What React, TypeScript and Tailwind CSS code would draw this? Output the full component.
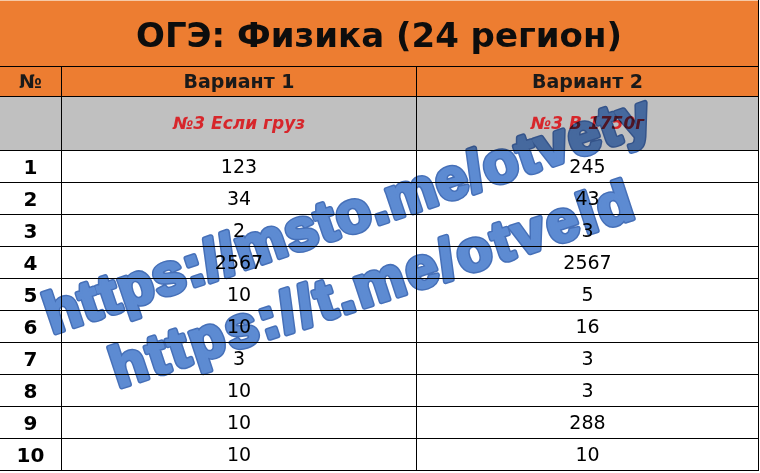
const rows = [
  { n: 1, a: "123", b: "245" },
  { n: 2, a: "34", b: "43" },
  { n: 3, a: "2", b: "3" },
  { n: 4, a: "2567", b: "2567" },
  { n: 5, a: "10", b: "5" },
  { n: 6, a: "10", b: "16" },
  { n: 7, a: "3", b: "3" },
  { n: 8, a: "10", b: "3" },
  { n: 9, a: "10", b: "288" },
  { n: 10, a: "10", b: "10" },
];

const WmLines = () => (
  <>
    <text x="52" y="334" textLength="636" lengthAdjust="spacing" transform="rotate(-18.6 52 334)">
      https://msto.me/otvety
    </text>
    <text x="118" y="388" textLength="546" lengthAdjust="spacing" transform="rotate(-18.2 118 388)">
      https://t.me/otveld
    </text>
  </>
);

const Watermark = () => (
  <svg
    className="absolute inset-0 pointer-events-none mix-blend-multiply"
    width="760"
    height="473"
    viewBox="0 0 760 473"
  >
    <g
      fontFamily="'Liberation Sans', Arial, sans-serif"
      fontWeight="bold"
      fontSize="57"
      strokeLinejoin="round"
      strokeLinecap="round"
    >
      {/* darker rim under the fill */}
      <g fill="#4670b8" stroke="#4670b8" strokeWidth="5.5">
        <WmLines />
      </g>
      <g fill="#5d8bd2" stroke="#5d8bd2" strokeWidth="2.5">
        <WmLines />
      </g>
    </g>
  </svg>
);

export default function App() {
  return (
    <div className="relative w-[760px] h-[473px] bg-white overflow-hidden font-['DejaVu_Sans',sans-serif] text-black">
      <div className="w-[759px] border-r-[1.5px] border-black">
        {/* Title */}
        <div className="h-[67px] bg-[#ed7d31] border-t border-t-[#f6c9a6] border-b-[1.5px] border-b-black flex items-center justify-center">
          <span className="text-[34px] font-bold text-[#0d0d0d] leading-none pt-[2px]">
            ОГЭ: Физика (24 регион)
          </span>
        </div>

        {/* Column headers */}
        <div className="h-[30px] bg-[#ed7d31] border-b-[1.5px] border-black flex text-[19px] font-bold text-[#1a1a1a]">
          <div className="w-[62px] border-r-[1.5px] border-black flex items-center justify-center">№</div>
          <div className="w-[355px] border-r-[1.5px] border-black flex items-center justify-center">Вариант 1</div>
          <div className="flex-1 flex items-center justify-center">Вариант 2</div>
        </div>

        {/* Task notes */}
        <div className="h-[54px] bg-[#c0c0c0] border-b-[1.5px] border-black flex text-[17px] font-bold italic text-[#d7262b]">
          <div className="w-[62px] border-r-[1.5px] border-black" />
          <div className="w-[355px] border-r-[1.5px] border-black flex items-center justify-center">№3 Если груз</div>
          <div className="flex-1 flex items-center justify-center">№3 В 1750г</div>
        </div>

        {/* Answers */}
        {rows.map((r) => (
          <div key={r.n} className="h-[32px] border-b-[1.5px] border-black flex text-[19px]">
            <div className="w-[62px] border-r-[1.5px] border-black flex items-center justify-center font-bold text-[20px]">
              {r.n}
            </div>
            <div className="w-[355px] border-r-[1.5px] border-black flex items-center justify-center">{r.a}</div>
            <div className="flex-1 flex items-center justify-center">{r.b}</div>
          </div>
        ))}
      </div>

      <Watermark />
    </div>
  );
}
